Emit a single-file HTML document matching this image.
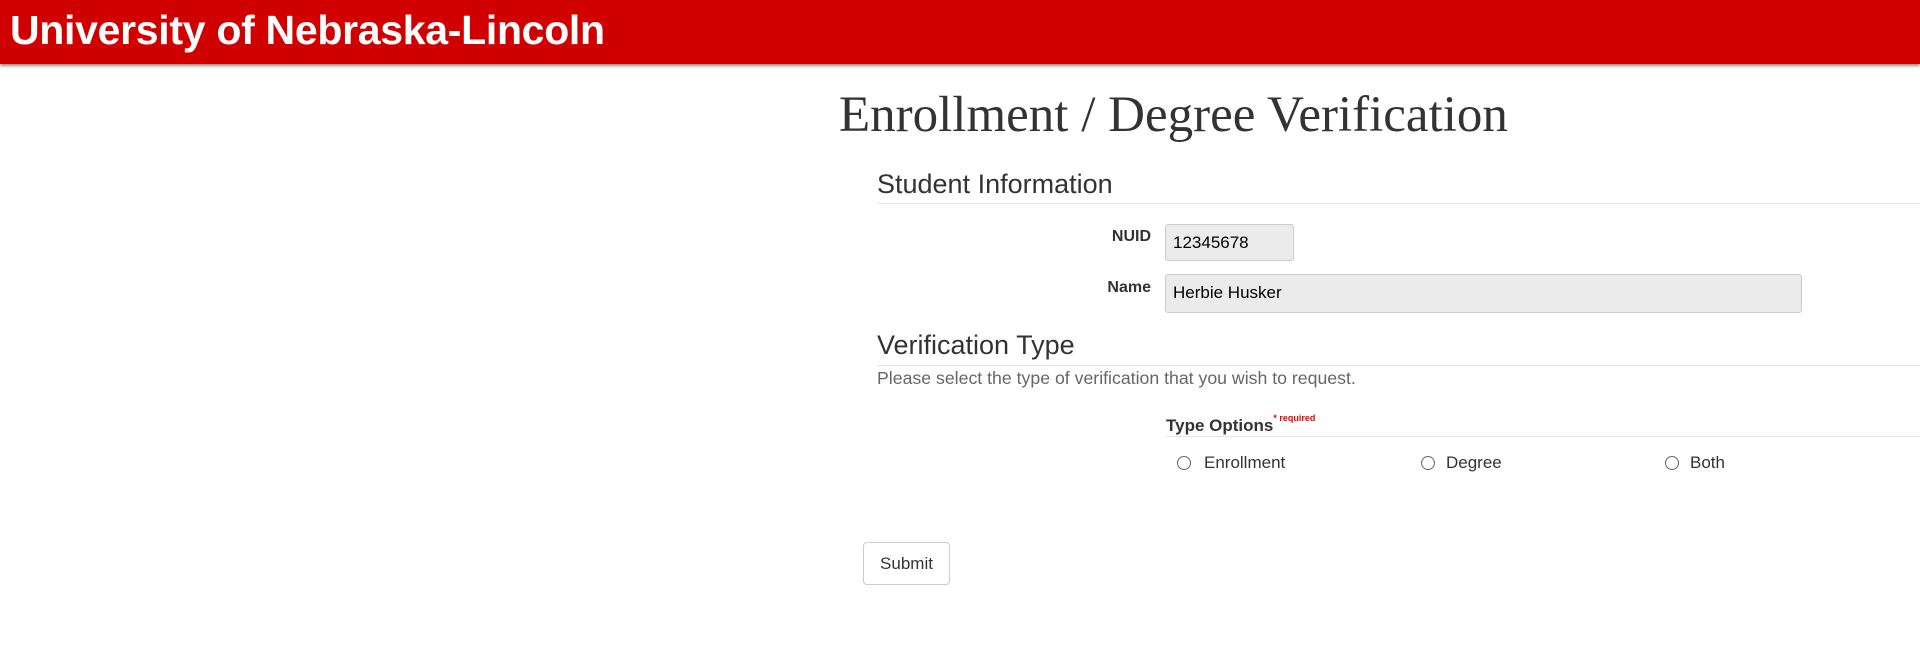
<!DOCTYPE html>
<html><head><style>
*{margin:0;padding:0;box-sizing:border-box}
body{width:1920px;height:648px;background:#fff;font-family:"Liberation Sans",Arial,sans-serif;color:#333;position:relative;overflow:hidden}
.bar{position:absolute;left:0;top:0;width:1920px;height:64px;background:#d00000;box-shadow:0 2px 3px rgba(0,0,0,.45)}
.bar span{position:absolute;left:10px;top:7px;font-size:41px;font-weight:bold;color:#fff;letter-spacing:-0.3px}
.a{position:absolute;white-space:nowrap}
h1{position:absolute;left:839px;top:86px;font-family:"Liberation Serif",Georgia,serif;font-weight:normal;font-size:51px;color:#333;white-space:nowrap}
.h2{font-size:27px;color:#333}
.line{position:absolute;height:1px;background:#e5e5e5}
.lbl{font-weight:bold;font-size:16px;text-align:right;width:200px}
.inp{position:absolute;background:#ebebeb;border:1px solid #ccc;border-radius:3px;font-size:17px;color:#000;padding:8px 7px}
.radio{position:absolute;width:14px;height:14px;border:1px solid #666;border-radius:50%;background:#fff}
.rl{font-size:17px;color:#333}
.btn{position:absolute;left:863px;top:542px;width:87px;height:43px;border:1px solid #ccc;border-radius:4px;font-size:17px;text-align:center;line-height:41px;color:#333;background:#fff}
</style></head><body>
<div class="bar"><span>University of Nebraska-Lincoln</span></div>
<h1>Enrollment / Degree Verification</h1>
<div class="a h2" style="left:877px;top:169px">Student Information</div>
<div class="line" style="left:877px;top:203px;width:1043px"></div>
<div class="a lbl" style="left:951px;top:228px">NUID</div>
<div class="inp" style="left:1165px;top:224px;width:129px;height:37px">12345678</div>
<div class="a lbl" style="left:951px;top:279px">Name</div>
<div class="inp" style="left:1165px;top:274px;width:637px;height:39px">Herbie Husker</div>
<div class="a h2" style="left:877px;top:330px">Verification Type</div>
<div class="line" style="left:877px;top:365px;width:1043px"></div>
<div class="a" style="left:877px;top:368px;font-size:17.7px;color:#666">Please select the type of verification that you wish to request.</div>
<div class="a" style="left:1166px;top:416px;font-size:17px;font-weight:bold">Type Options<sup style="color:#e00;font-size:9px;font-weight:bold;vertical-align:top;position:relative;top:-3px">* required</sup></div>
<div class="line" style="left:1166px;top:436px;width:754px"></div>
<div class="radio" style="left:1177px;top:456px"></div><div class="a rl" style="left:1204px;top:453px">Enrollment</div>
<div class="radio" style="left:1421px;top:456px"></div><div class="a rl" style="left:1446px;top:453px">Degree</div>
<div class="radio" style="left:1665px;top:456px"></div><div class="a rl" style="left:1690px;top:453px">Both</div>
<div class="btn">Submit</div>
</body></html>
